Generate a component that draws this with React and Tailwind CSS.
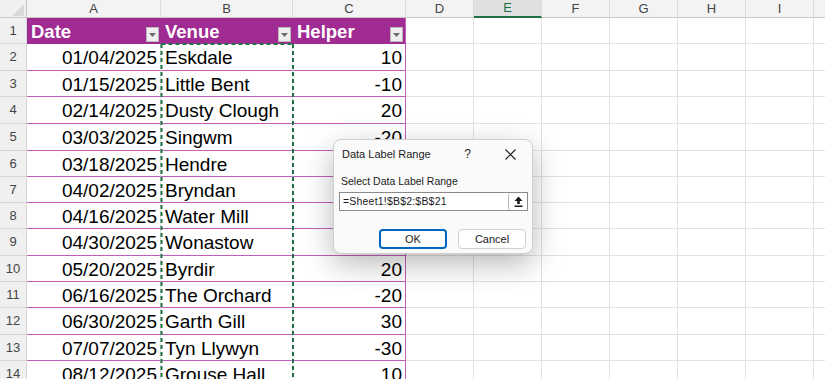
import React from "react";

const cols = [
  { key: "A", w: "w-[134px]" },
  { key: "B", w: "w-[132px]" },
  { key: "C", w: "w-[113px]" },
];

const rest = ["D", "E", "F", "G", "H", "I", "J"];

const rows = [
  { n: 2, date: "01/04/2025", venue: "Eskdale", helper: "10", h: "h-[27px]" },
  { n: 3, date: "01/15/2025", venue: "Little Bent", helper: "-10", h: "h-[26px]" },
  { n: 4, date: "02/14/2025", venue: "Dusty Clough", helper: "20", h: "h-[27px]" },
  { n: 5, date: "03/03/2025", venue: "Singwm", helper: "-20", h: "h-[27px]" },
  { n: 6, date: "03/18/2025", venue: "Hendre", helper: "10", h: "h-[26px]" },
  { n: 7, date: "04/02/2025", venue: "Bryndan", helper: "-10", h: "h-[26px]" },
  { n: 8, date: "04/16/2025", venue: "Water Mill", helper: "30", h: "h-[26px]" },
  { n: 9, date: "04/30/2025", venue: "Wonastow", helper: "-30", h: "h-[27px]" },
  { n: 10, date: "05/20/2025", venue: "Byrdir", helper: "20", h: "h-[26px]" },
  { n: 11, date: "06/16/2025", venue: "The Orchard", helper: "-20", h: "h-[26px]" },
  { n: 12, date: "06/30/2025", venue: "Garth Gill", helper: "30", h: "h-[27px]" },
  { n: 13, date: "07/07/2025", venue: "Tyn Llywyn", helper: "-30", h: "h-[26px]" },
  { n: 14, date: "08/12/2025", venue: "Grouse Hall", helper: "10", h: "h-[26px]" },
];

function RowHead({ n }) {
  return (
    <div className="w-[27px] shrink-0 bg-[#f0f0f0] border-r border-b border-[#d6d6d6] flex items-center justify-center text-[13px] text-[#444]">
      {n}
    </div>
  );
}

function EmptyCells() {
  return rest.map((c) => (
    <div key={c} className="w-[68px] shrink-0 border-r border-b border-[#e1e1e1]" />
  ));
}

function FilterButton() {
  return (
    <div className="self-end mb-[1px] mr-[2px] ml-auto w-[13px] h-[15px] bg-[#efefef] border border-[#b8b8b8] flex items-center justify-center">
      <svg width="7" height="4" viewBox="0 0 7 4">
        <path d="M0 0 L7 0 L3.5 4 Z" fill="#6a6a6a" />
      </svg>
    </div>
  );
}

export default function App() {
  return (
    <div className="relative w-[825px] h-[379px] overflow-hidden bg-white font-['Liberation_Sans',Arial,sans-serif]">
      {/* column letters */}
      <div className="flex h-[18px]">
        <div className="w-[27px] shrink-0 bg-[#f0f0f0] border-r border-b border-[#c8c8c8] relative">
          <svg className="absolute left-[12px] top-[4px]" width="12" height="12" viewBox="0 0 12 12">
            <path d="M12 0 L12 12 L0 12 Z" fill="#d8d8d8" />
          </svg>
        </div>
        {cols.map((c) => (
          <div key={c.key} className={`${c.w} shrink-0 bg-[#f3f3f3] border-r border-b border-r-[#dcdcdc] border-b-[#c8c8c8] flex items-center justify-center text-[13px] text-[#444]`}>
            {c.key}
          </div>
        ))}
        {rest.map((c) =>
          c === "E" ? (
            <div key={c} className="w-[68px] shrink-0 bg-[#e0e0e0] border-r border-[#dcdcdc] border-b-2 border-b-[#1e7145] flex items-center justify-center text-[13px] text-[#1e7145]">
              {c}
            </div>
          ) : (
            <div key={c} className="w-[68px] shrink-0 bg-[#f3f3f3] border-r border-b border-r-[#dcdcdc] border-b-[#c8c8c8] flex items-center justify-center text-[13px] text-[#444]">
              {c}
            </div>
          )
        )}
      </div>

      {/* header row */}
      <div className="flex h-[26px]">
        <RowHead n={1} />
        {[
          { t: "Date", w: "w-[134px]" },
          { t: "Venue", w: "w-[132px]" },
          { t: "Helper", w: "w-[113px]" },
        ].map((h, i) => (
          <div key={h.t} className={`${h.w} shrink-0 bg-[#a02b93] border-b border-[#a02b93] ${i === 2 ? "border-r border-r-[#c35fb9]" : ""} flex items-center pl-[4px] text-white font-bold text-[18.5px]`}>
            <span className="pt-[2px]">{h.t}</span>
            <FilterButton />
          </div>
        ))}
        <EmptyCells />
      </div>

      {/* data rows */}
      {rows.map((r) => (
        <div key={r.n} className={`flex ${r.h}`}>
          <RowHead n={r.n} />
          <div className="w-[134px] shrink-0 border-b border-b-[#c35fb9] border-r border-r-[#e1e1e1] flex items-center justify-end pr-[3px] pt-[3px] text-[19px] text-black">
            {r.date}
          </div>
          <div className="w-[132px] shrink-0 border-b border-b-[#c35fb9] border-r border-r-[#e1e1e1] flex items-center pl-[4px] pt-[3px] text-[19px] text-black whitespace-nowrap">
            {r.venue}
          </div>
          <div className="w-[113px] shrink-0 border-b border-r border-[#c35fb9] flex items-center justify-end pr-[3px] pt-[3px] text-[19px] text-black">
            {r.helper}
          </div>
          <EmptyCells />
        </div>
      ))}

      {/* copy marquee around B2:B21 */}
      <svg className="absolute left-[160px] top-[43px]" width="136" height="340">
        <path d="M1.5 1 L133 1 M1.5 1 L1.5 340 M133 1 L133 340" stroke="#1e7145" strokeWidth="2" strokeDasharray="4 3" fill="none" />
      </svg>

      {/* dialog */}
      <div className="absolute left-[333px] top-[139px] w-[200px] h-[115px] rounded-[8px] bg-[#fafafa] border border-[#cfcfcf] shadow-[0_10px_30px_rgba(0,0,0,0.28)] flex flex-col text-[#1a1a1a]">
        <div className="h-[28px] flex items-center pl-[8px] text-[11px]">
          <span>Data Label Range</span>
          <span className="ml-auto mr-[34px] text-[12px]">?</span>
          <svg className="mr-[16px]" width="11" height="11" viewBox="0 0 11 11">
            <path d="M0.5 0.5 L10.5 10.5 M10.5 0.5 L0.5 10.5" stroke="#1a1a1a" strokeWidth="1.1" />
          </svg>
        </div>
        <div className="pl-[7px] mt-[7px] text-[10.5px] leading-[12px]">Select Data Label Range</div>
        <div className="ml-[5px] mt-[5px] w-[189px] h-[19px] bg-white border border-[#8a8a8a] flex items-center">
          <span className="pl-[3px] text-[10.5px] tracking-[0.2px]">=Sheet1!$B$2:$B$21</span>
          <div className="ml-auto w-[19px] h-full border-l border-[#b8b8b8] rounded-[2px] flex items-center justify-center">
            <svg width="9" height="11" viewBox="0 0 9 11">
              <path d="M4.5 0.5 L8.5 5 L5.8 5 L5.8 8 L3.2 8 L3.2 5 L0.5 5 Z" fill="#1a1a1a" />
              <rect x="0.5" y="9.5" width="8" height="1.5" fill="#1a1a1a" />
            </svg>
          </div>
        </div>
        <div className="flex gap-[11px] ml-[45px] mt-[18px]">
          <div className="w-[68px] h-[20px] bg-white border-2 border-[#0067c0] rounded-[4px] flex items-center justify-center text-[11px]">
            OK
          </div>
          <div className="w-[68px] h-[20px] bg-white border border-[#d0d0d0] rounded-[4px] flex items-center justify-center text-[11px]">
            Cancel
          </div>
        </div>
      </div>
    </div>
  );
}
